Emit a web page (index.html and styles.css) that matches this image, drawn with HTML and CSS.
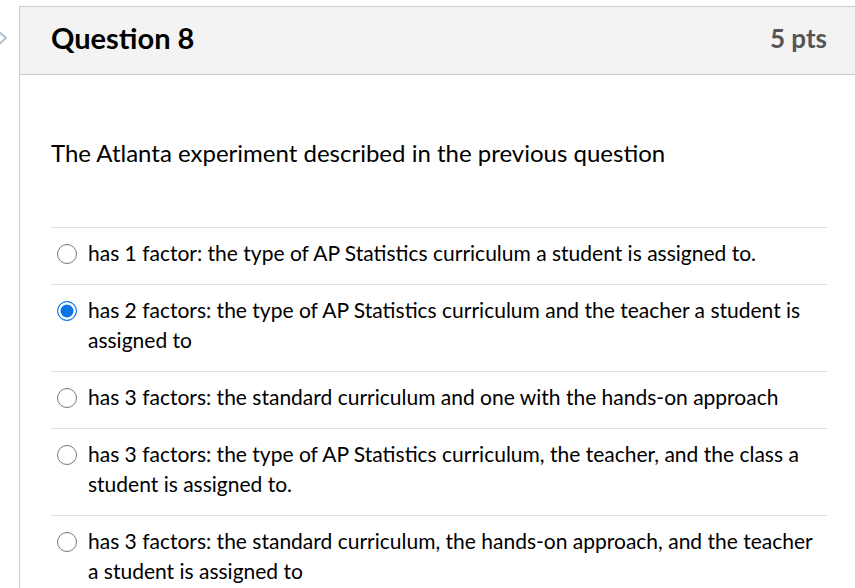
FILE: index.html
```html
<!DOCTYPE html>
<html lang="en">
<head>
    <meta charset="UTF-8">
    <meta name="viewport" content="width=device-width, initial-scale=1.0">
    <title>Question 8</title>
    <link rel="stylesheet" href="styles.css">
</head>
<body>

<a class="nav-arrow" href="#">
    <svg width="10" height="22" viewBox="0 0 10 22">
        <path d="M-3 3 L6 11 L-3 19" fill="none" stroke="#b3c3cf" stroke-width="2.2"/>
    </svg>
</a>

<div class="question">
    <div class="question-header">
        <h2>Question 8</h2>
        <span class="points">5 pts</span>
    </div>
    <div class="question-body">
        <p class="question-text">The Atlanta experiment described in the previous question</p>
        <div class="answers">
            <label class="answer">
                <input type="radio" name="q8">
                <span>has 1 factor: the type of AP Statistics curriculum a student is assigned to.</span>
            </label>
            <label class="answer">
                <input type="radio" name="q8" checked>
                <span>has 2 factors: the type of AP Statistics curriculum and the teacher a student is assigned to</span>
            </label>
            <label class="answer">
                <input type="radio" name="q8">
                <span>has 3 factors: the standard curriculum and one with the hands-on approach</span>
            </label>
            <label class="answer">
                <input type="radio" name="q8">
                <span>has 3 factors: the type of AP Statistics curriculum, the teacher, and the class a student is assigned to.</span>
            </label>
            <label class="answer">
                <input type="radio" name="q8">
                <span>has 3 factors: the standard curriculum, the hands-on approach, and the teacher a student is assigned to</span>
            </label>
        </div>
    </div>
</div>

</body>
</html>
```

FILE: styles.css
```css
html, body {
    overflow: hidden;
}
body {
    font-family: Lato, "Open Sans", sans-serif;
    margin: 0;
    background-color: white;
    color: #000;
}
.nav-arrow {
    position: absolute;
    left: 0;
    top: 27px;
}
.question {
    margin: 6px 0 0 19px;
    width: 838px;
    border: 1px solid #c7cdd1;
}
.question-header {
    display: flex;
    align-items: center;
    justify-content: space-between;
    height: 68px;
    box-sizing: border-box;
    padding: 0 31px 6px;
    background-color: #f3f3f3;
    border-bottom: 1px solid #c7cdd1;
}
.question-header h2 {
    margin: 0;
    font-size: 29px;
    font-weight: 700;
}
.points {
    font-size: 26px;
    font-weight: 700;
    color: #555;
}
.question-body {
    padding: 0 31px;
}
.question-text {
    margin: 0;
    padding: 60px 0 56px;
    font-size: 24px;
    line-height: 36px;
}
.answer {
    display: flex;
    align-items: flex-start;
    gap: 11px;
    padding: 10px 0 16px;
    border-top: 1px solid #dde1e4;
    font-size: 21px;
    line-height: 30px;
    cursor: pointer;
}
.answer input {
    appearance: none;
    flex: none;
    width: 20px;
    height: 20px;
    margin: 6px 0 0 6px;
    border: 1.5px solid #777;
    border-radius: 50%;
    background-color: white;
}
.answer input:checked {
    border: 1.5px solid #0b74e8;
    box-shadow: inset 0 0 0 2.5px white;
    background-color: #0b74e8;
}
```
